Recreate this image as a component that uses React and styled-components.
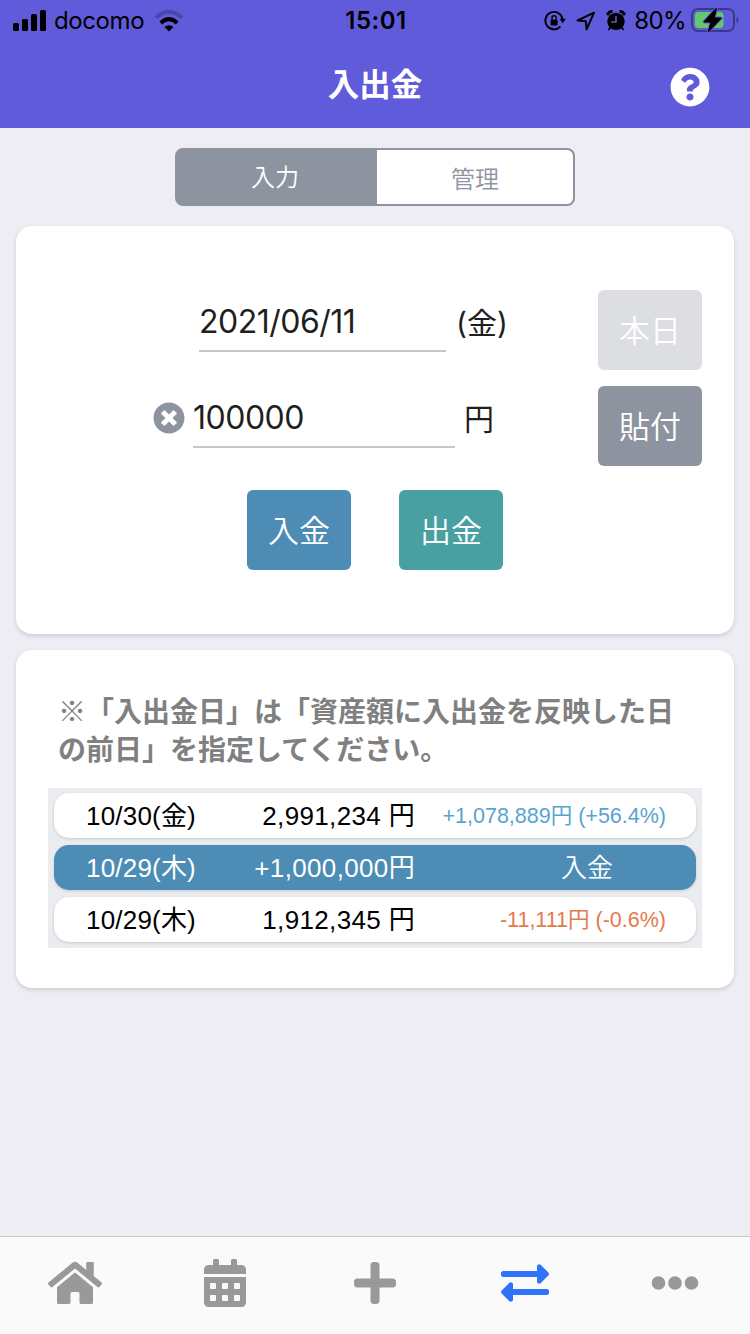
import React, { useState } from "react";
import styled, { createGlobalStyle } from "styled-components";
import {
  FaHome,
  FaCalendarAlt,
  FaPlus,
  FaExchangeAlt,
  FaEllipsisH,
  FaQuestionCircle,
  FaTimesCircle,
} from "react-icons/fa";

const GlobalStyle = createGlobalStyle`
  * {
    box-sizing: border-box;
  }

  body {
    margin: 0;
    background-color: #eeedf3;
    font-family: Inter, "Noto Sans CJK JP", sans-serif;
  }

  button,
  input {
    font-family: inherit;
    margin: 0;
    padding: 0;
    border: none;
    border-radius: 0;
    outline: none;
  }
`;

const Screen = styled.div`
  display: flex;
  flex-direction: column;
  width: 750px;
  height: 1334px;
  overflow: hidden;
`;

const StatusBar = styled.div`
  display: grid;
  grid-template-columns: 1fr auto 1fr;
  align-items: center;
  height: 40px;
  padding: 0 11px 0 13px;
  background-color: #605bdb;
  color: #000;
  font-size: 24px;
  line-height: 40px;
`;

const StatusLeft = styled.div`
  display: flex;
  align-items: center;
`;

const StatusRight = styled.div`
  display: flex;
  align-items: center;
  justify-content: flex-end;
`;

const Carrier = styled.span`
  margin: 1px 10px 0 7px;
  letter-spacing: -0.4px;
`;

const Clock = styled.span`
  padding-top: 1px;
  font-weight: 600;
  letter-spacing: 0.5px;
`;

const Percent = styled.span`
  margin: 0 5px 0 8px;
  letter-spacing: -0.6px;
`;

const Header = styled.header`
  display: grid;
  grid-template-columns: 1fr auto 1fr;
  align-items: center;
  height: 88px;
  padding: 0 40px;
  background-color: #605bdb;
  color: #fff;
`;

const Title = styled.h1`
  grid-column: 2;
  margin: 0;
  font-size: 31.5px;
  font-weight: 700;
  line-height: 90px;
`;

const HelpButton = styled.button`
  display: flex;
  justify-self: end;
  margin-top: 4px;
  background: none;
  color: #fff;
  font-size: 40px;
`;

const Content = styled.main`
  display: flex;
  flex: 1;
  flex-direction: column;
  gap: 16px;
  padding: 20px 16px 0;
`;

const Segment = styled.div`
  display: flex;
  align-self: center;
  width: 400px;
  height: 58px;
  margin-bottom: 4px;
`;

const SegmentButton = styled.button`
  width: ${(props) => (props.$active ? "202px" : "198px")};
  padding: ${(props) => (props.$active ? "0 2px 3px 0" : "1px 0 0")};
  border: 2px solid #8e949f;
  border-left-width: ${(props) => (props.$active ? "2px" : "0")};
  border-radius: ${(props) => (props.$active ? "8px 0 0 8px" : "0 8px 8px 0")};
  background-color: ${(props) => (props.$active ? "#8e949f" : "#fff")};
  color: ${(props) => (props.$active ? "#fff" : "#8e949f")};
  font-size: 24px;
  font-weight: 350;
`;

const Card = styled.section`
  border-radius: 16px;
  background-color: #fff;
  box-shadow: 0 2px 4px rgba(0, 0, 0, 0.14);
`;

const FormCard = styled(Card)`
  display: flex;
  flex-direction: column;
  height: 408px;
  padding: 64px 32px 0;
`;

const FormRow = styled.div`
  display: flex;
  height: 80px;
  margin-bottom: 16px;
  padding-left: ${(props) => props.$indent};
`;

const Field = styled.input`
  width: ${(props) => props.$width};
  height: 62px;
  padding-top: 2px;
  border-bottom: 2px solid #c8c8c8;
  background: none;
  color: #1f1f21;
  font-size: 32px;
  letter-spacing: ${(props) => props.$spacing};
`;

const Unit = styled.span`
  margin-left: ${(props) => props.$gap};
  color: #1f1f21;
  font-size: 30px;
  font-weight: 400;
  line-height: 66px;
`;

const ClearButton = styled.button`
  display: flex;
  align-items: center;
  height: 64px;
  margin-right: 8px;
  background: none;
  color: #8e949f;
  font-size: 32px;
`;

const Button = styled.button`
  width: 104px;
  height: 80px;
  padding-bottom: 4px;
  border-radius: 6px;
  background-color: ${(props) => props.$color};
  color: #fff;
  font-size: 31px;
  font-weight: 350;
  opacity: ${(props) => (props.disabled ? 0.3 : 1)};
`;

const SideButton = styled(Button)`
  margin-left: auto;
`;

const Actions = styled.div`
  display: flex;
  justify-content: center;
  gap: 48px;
  margin-top: 8px;
`;

const NoteCard = styled(Card)`
  height: 338px;
  padding: 41px 32px 0;
`;

const Note = styled.p`
  margin: 0 0 21px;
  padding-left: 10px;
  color: #808080;
  font-family: "Noto Sans CJK JP", sans-serif;
  font-size: 28px;
  font-weight: 700;
  line-height: 38px;
  white-space: nowrap;
`;

const Sample = styled.div`
  display: flex;
  flex-direction: column;
  gap: 7px;
  height: 160px;
  padding: 5px 6px;
  background-color: #ebecef;
  font-family: "Liberation Sans", "Noto Sans CJK JP", sans-serif;
`;

const SampleRow = styled.div`
  display: grid;
  grid-template-columns: 120px 209px 1fr;
  height: 45px;
  padding: 0 30px 0 32px;
  border-radius: 15px;
  background-color: ${(props) => (props.$deposit ? "#4c8cb5" : "#fff")};
  color: ${(props) => (props.$deposit ? "#fff" : "#000")};
  font-size: 26px;
  line-height: 46px;
  white-space: nowrap;
  box-shadow: 0 1px 3px rgba(0, 0, 0, 0.16);
`;

const SampleDate = styled.span`
  letter-spacing: 0.2px;
`;

const SampleAmount = styled.span`
  text-align: right;
  letter-spacing: 0.35px;
`;

const SampleChange = styled.span`
  padding-right: ${(props) => (props.$deposit ? "53px" : "0")};
  color: ${(props) => props.$color};
  font-size: ${(props) => (props.$deposit ? "26px" : "21.5px")};
  font-weight: ${(props) => (props.$deposit ? 350 : 400)};
  text-align: right;
`;

const TabBar = styled.nav`
  display: grid;
  grid-template-columns: repeat(5, 1fr);
  height: 98px;
  border-top: 1px solid #c8c8c8;
  background-color: #fafafa;
`;

const Tab = styled.button`
  display: flex;
  align-items: center;
  justify-content: center;
  padding-bottom: 5px;
  background: none;
  color: ${(props) => (props.$active ? "#2f74f8" : "#999")};

  svg {
    width: 54px;
    height: 48px;
  }
`;

const SignalIcon = () => (
  <svg width="34" height="22" viewBox="0 0 34 22">
    <rect x="0" y="13" width="6" height="8" rx="1.6" />
    <rect x="9" y="9" width="6" height="12" rx="1.6" />
    <rect x="18" y="4" width="6" height="17" rx="1.6" />
    <rect x="27" y="0" width="6" height="21" rx="1.6" />
  </svg>
);

const WifiIcon = () => (
  <svg width="30" height="22" viewBox="0 0 30 22">
    <path
      d="M1.9 7.9 Q15 -4.3 28.1 7.9"
      fill="none"
      stroke="#000"
      strokeOpacity="0.22"
      strokeWidth="4"
    />
    <path d="M6.8 13 Q15 5.3 23.2 13" fill="none" stroke="#000" strokeWidth="4" />
    <path d="M10.5 17 Q15 13.4 19.5 17 L15 21.4 Z" />
  </svg>
);

const RotationLockIcon = () => (
  <svg width="22" height="22" viewBox="0 0 22 22">
    <path
      d="M16.4 16.6 A8.7 8.7 0 1 1 18.7 9.6"
      fill="none"
      stroke="#000"
      strokeWidth="1.9"
    />
    <path d="M15.6 8.8 H21.8 L18.7 13.2 Z" />
    <rect x="6.6" y="9.4" width="7" height="6" rx="1" />
    <path
      d="M8 9.6 V7.9 A2.1 2.1 0 0 1 12.2 7.9 V9.6"
      fill="none"
      stroke="#000"
      strokeWidth="1.4"
    />
  </svg>
);

const LocationIcon = () => (
  <svg width="20" height="20" viewBox="0 0 20 20">
    <path
      d="M1.6 9.5 L18 1.7 L10.6 18.4 L9.9 10.2 Z"
      fill="none"
      stroke="#000"
      strokeWidth="2"
      strokeLinejoin="round"
    />
  </svg>
);

const AlarmIcon = () => (
  <svg width="20" height="22" viewBox="0 0 20 22">
    <circle cx="10" cy="11.4" r="8.7" />
    <path
      d="M2 4 Q3 2 5.2 1.6 M14.8 1.6 Q17 2 18 4"
      fill="none"
      stroke="#000"
      strokeWidth="3"
      strokeLinecap="round"
    />
    <path d="M4.2 17.6 L2.4 20 M15.8 17.6 L17.6 20" stroke="#000" strokeWidth="1.8" />
    <path d="M10 6 V12 H5.2" fill="none" stroke="#605bdb" strokeWidth="1.5" />
  </svg>
);

const BatteryIcon = () => (
  <svg width="48" height="26" viewBox="0 0 48 26">
    <rect
      x="1"
      y="1"
      width="42"
      height="22"
      rx="6"
      fill="none"
      stroke="#000"
      strokeOpacity="0.38"
      strokeWidth="2"
    />
    <path d="M45.5 8.5 Q47.5 9.5 47.5 12 Q47.5 14.5 45.5 15.5 Z" fillOpacity="0.38" />
    <rect x="4" y="4" width="28.5" height="16" rx="3.4" fill="#63c867" />
    <path
      d="M25.3 0.8 L13.3 13.8 H20.4 L17.6 23.2 L29.8 10.2 H22.8 Z"
      stroke="#605bdb"
      strokeWidth="3.4"
      strokeLinejoin="round"
    />
    <path
      d="M25.3 0.8 L13.3 13.8 H20.4 L17.6 23.2 L29.8 10.2 H22.8 Z"
      stroke="#000"
      strokeWidth="1.4"
      strokeLinejoin="round"
    />
  </svg>
);

const StatusIcons = styled.div`
  display: flex;
  align-items: center;
  gap: 10px;
`;

const samples = [
  {
    date: "10/30(金)",
    amount: "2,991,234 円",
    change: "+1,078,889円 (+56.4%)",
    color: "#57a4d2",
  },
  {
    date: "10/29(木)",
    amount: "+1,000,000円",
    change: "入金",
    deposit: true,
  },
  {
    date: "10/29(木)",
    amount: "1,912,345 円",
    change: "-11,111円 (-0.6%)",
    color: "#e4794b",
  },
];

const tabs = [
  { name: "home", icon: FaHome },
  { name: "calendar", icon: FaCalendarAlt },
  { name: "add", icon: FaPlus },
  { name: "transfer", icon: FaExchangeAlt },
  { name: "more", icon: FaEllipsisH },
];

const App = () => {
  const [date, setDate] = useState("2021/06/11");
  const [amount, setAmount] = useState("100000");
  const [activeTab, setActiveTab] = useState("transfer");

  return (
    <React.Fragment>
      <GlobalStyle />
      <Screen>
        <StatusBar>
          <StatusLeft>
            <SignalIcon />
            <Carrier>docomo</Carrier>
            <WifiIcon />
          </StatusLeft>
          <Clock>15:01</Clock>
          <StatusRight>
            <StatusIcons>
              <RotationLockIcon />
              <LocationIcon />
              <AlarmIcon />
            </StatusIcons>
            <Percent>80%</Percent>
            <BatteryIcon />
          </StatusRight>
        </StatusBar>
        <Header>
          <Title>入出金</Title>
          <HelpButton>
            <FaQuestionCircle />
          </HelpButton>
        </Header>
        <Content>
          <Segment>
            <SegmentButton $active>入力</SegmentButton>
            <SegmentButton>管理</SegmentButton>
          </Segment>
          <FormCard>
            <FormRow $indent="151px">
              <Field
                $width="247px"
                $spacing="-0.5px"
                value={date}
                onChange={(event) => setDate(event.target.value)}
              />
              <Unit $gap="10px">(金)</Unit>
              <SideButton $color="#8e949f" disabled>
                本日
              </SideButton>
            </FormRow>
            <FormRow $indent="105px">
              <ClearButton onClick={() => setAmount("")}>
                <FaTimesCircle />
              </ClearButton>
              <Field
                $width="262px"
                $spacing="-0.5px"
                value={amount}
                onChange={(event) => setAmount(event.target.value)}
              />
              <Unit $gap="9px">円</Unit>
              <SideButton $color="#8e949f">貼付</SideButton>
            </FormRow>
            <Actions>
              <Button $color="#4c8cb5">入金</Button>
              <Button $color="#48a0a2">出金</Button>
            </Actions>
          </FormCard>
          <NoteCard>
            <Note>
              ※「入出金日」は「資産額に入出金を反映した日
              <br />
              の前日」を指定してください。
            </Note>
            <Sample>
              {samples.map((row) => (
                <SampleRow key={row.amount} $deposit={row.deposit}>
                  <SampleDate>{row.date}</SampleDate>
                  <SampleAmount>{row.amount}</SampleAmount>
                  <SampleChange $deposit={row.deposit} $color={row.color}>
                    {row.change}
                  </SampleChange>
                </SampleRow>
              ))}
            </Sample>
          </NoteCard>
        </Content>
        <TabBar>
          {tabs.map(({ name, icon: Icon }) => (
            <Tab
              key={name}
              $active={name === activeTab}
              onClick={() => setActiveTab(name)}
            >
              <Icon />
            </Tab>
          ))}
        </TabBar>
      </Screen>
    </React.Fragment>
  );
};
export default App;
